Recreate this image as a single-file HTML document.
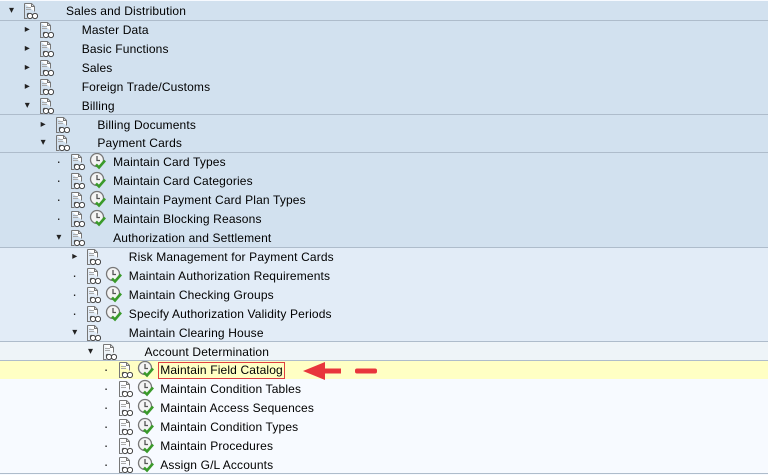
<!DOCTYPE html>
<html><head><meta charset="utf-8"><style>
body{margin:0;width:768px;height:475px;overflow:hidden;background:#f7faff;font-family:"Liberation Sans",sans-serif;font-size:12px;color:#000;position:relative}
.row{position:absolute;left:0;width:768px;height:19px}
.t{position:absolute;top:3px;white-space:nowrap;line-height:15px;letter-spacing:0.15px}
.m{position:absolute;top:0;font-size:10px;line-height:19px;color:#222}
.line{position:absolute;left:0;width:768px;height:1px;background:#aebccb}
svg{position:absolute}
</style></head><body>
<div id="c"></div>
<script>
var rows=[
[0,'o','Sales and Distribution'],
[1,'c','Master Data'],[1,'c','Basic Functions'],[1,'c','Sales'],[1,'c','Foreign Trade/Customs'],[1,'o','Billing'],
[2,'c','Billing Documents'],[2,'o','Payment Cards'],
[3,'l','Maintain Card Types'],[3,'l','Maintain Card Categories'],[3,'l','Maintain Payment Card Plan Types'],[3,'l','Maintain Blocking Reasons'],[3,'o','Authorization and Settlement'],
[4,'c','Risk Management for Payment Cards'],[4,'l','Maintain Authorization Requirements'],[4,'l','Maintain Checking Groups'],[4,'l','Specify Authorization Validity Periods'],[4,'o','Maintain Clearing House'],
[5,'o','Account Determination'],
[6,'l','Maintain Field Catalog'],[6,'l','Maintain Condition Tables'],[6,'l','Maintain Access Sequences'],[6,'l','Maintain Condition Types'],[6,'l','Maintain Procedures'],[6,'l','Assign G/L Accounts']];
function bg(i){if(i<=12)return'#d2e1ef';if(i<=17)return'#e2ecf7';if(i==18)return'#eef4f8';if(i==19)return'#ffffc4';return'#f7faff';}
var doc='<svg width="15" height="18" viewBox="0 0 15 18"><path d="M1.5 1.5h7l3 3v5" fill="#fff" stroke="#777"/><path d="M1.5 1.5v15h3" fill="none" stroke="#777"/><path d="M8.5 1.5v3h3" fill="none" stroke="#777"/><rect x="3" y="5" width="5" height="1" fill="#aaa"/><rect x="3" y="7" width="5" height="1" fill="#aaa"/><circle cx="7" cy="14" r="2.6" fill="#fff" stroke="#444"/><circle cx="12" cy="14" r="2.6" fill="#fff" stroke="#444"/><path d="M4 12.5l1.5-1.5M9.6 14h-.2" stroke="#444"/></svg>';
var clk='<svg width="18" height="18" viewBox="0 0 18 18"><circle cx="8" cy="8" r="6.5" fill="#f4f4f4" stroke="#777" stroke-width="1.3"/><path d="M8 4v4.5h3" stroke="#555" stroke-width="1.3" fill="none"/><path d="M7 12.5l3 3 6-7" stroke="#3a9a2a" stroke-width="2.6" fill="none"/></svg>';
var h='';
rows.forEach(function(r,i){
 var top=1+i*18.92,L=r[0];
 var mx=10+15.8*L,dx=23+15.8*L,tx=66+15.7*L;
 h+='<div class="row" style="top:'+top+'px;background:'+bg(i)+'">';
 var mk=r[1]=='o'?'\u25BE':(r[1]=='c'?'\u25B8':'\u00B7');
 h+='<span class="m" style="left:'+(mx-1)+'px;'+(r[1]=='l'?'font-size:14px;':'')+'">'+mk+'</span>';
 h+='<span style="position:absolute;left:'+dx+'px;top:1px">'+doc+'</span>';
 if(r[1]=='l')h+='<span style="position:absolute;left:'+(dx+19)+'px;top:0px">'+clk+'</span>';
 var sty='left:'+tx+'px;';
 if(i==19)sty='left:'+(tx-2)+'px;border:1px solid #e04040;padding:0 1px;top:2px;background:#ffffc4;';
 h+='<span class="t" style="'+sty+'">'+r[2]+'</span></div>';
});
[20,114,152,247,341,360,473].forEach(function(y){h+='<div class="line" style="top:'+y+'px"></div>';});
h+='<svg style="left:300px;top:358px" width="80" height="26"><path d="M3 13L25 4v6.5h16v5H25V22z" fill="#e8363c"/><rect x="55" y="10.5" width="22" height="5" rx="2" fill="#e8363c"/></svg>';
document.getElementById('c').innerHTML=h;
</script>
</body></html>
